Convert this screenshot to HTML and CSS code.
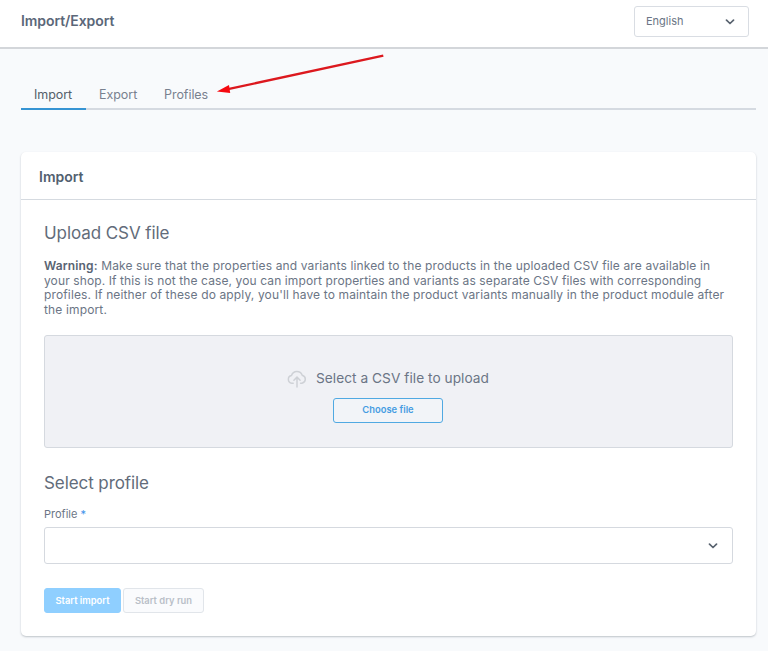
FILE: index.html
```html
<!DOCTYPE html>
<html lang="en">
<head>
<meta charset="utf-8">
<title>Import/Export</title>
<link rel="stylesheet" href="styles.css">
</head>
<body>
<header class="header">
  <h1 class="header-title"><span>Import/Export</span></h1>
  <div class="language">
    <span>English</span>
    <svg class="chevron" viewBox="0 0 10 6"><path d="M1.5 1.2 5 4.5 8.5 1.2"/></svg>
  </div>
</header>
<main class="content">
  <nav class="tabs">
    <a class="tab tab-active"><span>Import</span></a>
    <a class="tab"><span>Export</span></a>
    <a class="tab"><span>Profiles</span></a>
  </nav>
  <svg class="arrow" viewBox="0 0 170 42"><path class="arrow-line" d="M167.3 2.6 12 36.2"/><path class="arrow-head" d="M.9 38.5 13 32 14.2 40Z"/></svg>
  <section class="card">
    <h2 class="card-title"><span>Import</span></h2>
    <div class="card-body">
      <h3 class="section-title"><span>Upload CSV file</span></h3>
      <p class="warning"><span><b>Warning:</b> Make sure that the properties and variants linked to the products in the uploaded CSV file are available in</span><br><span class="tight">your shop. If this is not the case, you can import properties and variants as separate CSV files with corresponding</span><br><span>profiles. If neither of these do apply, you'll have to maintain the product variants manually in the product module after</span><br><span>the import.</span></p>
      <div class="dropzone">
        <div class="drop-label">
          <svg class="cloud" viewBox="0 0 20 18"><path d="M6.2 13.2H4.8A3.9 3.9 0 0 1 4.5 5.5 5.7 5.7 0 0 1 15.2 5.2 4.1 4.1 0 0 1 15 13.2h-1.4M10 17V7.4M6.9 10.2 10 7.1l3.1 3.1"/></svg>
          <span>Select a CSV file to upload</span>
        </div>
        <button class="btn btn-outline"><span>Choose file</span></button>
      </div>
      <h3 class="section-title profile-title"><span>Select profile</span></h3>
      <label class="label"><span>Profile</span> <span class="required">*</span></label>
      <div class="select">
        <svg class="chevron" viewBox="0 0 10 6"><path d="M1.5 1.2 5 4.5 8.5 1.2"/></svg>
      </div>
      <div class="actions">
        <button class="btn btn-primary"><span>Start import</span></button>
        <button class="btn btn-disabled"><span>Start dry run</span></button>
      </div>
    </div>
  </section>
</main>
</body>
</html>
```
FILE: styles.css
```css
* { box-sizing: border-box; }
body { margin: 0; height: 651px; overflow: hidden; background: #f8fafc; color: #6b7585; font-family: Inter, "Liberation Sans", sans-serif; }
h1, h2, h3, p { margin: 0; }
.header { height: 49px; padding: 0 19px 4px 21px; display: flex; align-items: center; justify-content: space-between; background: #fff; border-bottom: 2px solid #d3d6da; }
.header-title { padding-bottom: 1px; font-size: 14px; line-height: 20px; font-weight: 600; letter-spacing: -0.07px; color: #5b6779; }
.language { width: 115px; height: 31px; padding: 0 13px 2px 11px; display: flex; align-items: center; justify-content: space-between; border: 1px solid #d9dde3; border-radius: 3px; font-size: 11px; line-height: 16px; }
.language .chevron { position: relative; top: 1px; }
.chevron { width: 10px; height: 6px; fill: none; stroke: #59636f; stroke-width: 1.7; stroke-linecap: round; stroke-linejoin: round; }
.content { position: relative; padding: 31px 12px 0 21px; }
.tabs { height: 30px; display: flex; border-bottom: 2px solid #d5dae1; }
.tab { width: 65px; height: 30px; padding-left: 13px; font-size: 12.5px; line-height: 29px; letter-spacing: -0.05px; color: #78818f; }
.tab-active { color: #545e69; border-bottom: 2px solid #3694d3; }
.arrow { position: absolute; left: 216px; top: 4px; width: 170px; height: 42px; }
.arrow-line { fill: none; stroke: #dc181e; stroke-width: 2.4; }
.arrow-head { fill: #f50910; }
.card { height: 484px; margin-top: 42px; background: #fff; border-radius: 5px; box-shadow: 0 1px 2px rgba(40, 55, 70, 0.28); }
.card-title { height: 48px; padding-left: 18px; border-bottom: 1px solid #d5dae0; font-size: 14px; line-height: 49px; font-weight: 600; color: #52606f; }
.card-body { padding: 20px 23px 0; }
.section-title { font-size: 17px; line-height: 26px; font-weight: 400; letter-spacing: -0.08px; color: #626c7a; }
.warning { margin-top: 13px; font-size: 12px; line-height: 14.5px; letter-spacing: 0.14px; white-space: nowrap; }
.warning b { font-weight: 600; color: #596473; }
.warning .tight { letter-spacing: 0.11px; }
.dropzone { height: 113px; margin-top: 18px; padding: 32px 1px 0 0; display: flex; flex-direction: column; align-items: center; background: #f0f1f5; border: 1px solid #d5d9df; border-radius: 3px; }
.drop-label { height: 20px; display: flex; align-items: center; gap: 9px; font-size: 13.7px; line-height: 20px; letter-spacing: 0.04px; }
.cloud { width: 20px; height: 18px; margin-top: 2px; fill: none; stroke: #ced1d6; stroke-width: 1.5; stroke-linecap: round; stroke-linejoin: round; }
.btn { height: 25px; padding: 0; border: 1px solid; border-radius: 3px; font-family: inherit; font-size: 9.4px; line-height: 14px; font-weight: 600; }
.btn-outline { width: 110px; margin-top: 10px; padding-bottom: 1px; background: #f2f4f8; border-color: #50a9e2; color: #469ce2; }
.profile-title { margin-top: 22px; }
.label { display: block; margin-top: 9px; font-size: 11px; line-height: 18px; }
.required { color: #3f93ea; }
.select { height: 37px; margin-top: 4px; padding-right: 14px; display: flex; align-items: center; justify-content: flex-end; border: 1px solid #d5d9df; border-radius: 3px; }
.actions { display: flex; gap: 2px; margin-top: 24px; }
.btn-primary { width: 77px; background: #8fcfff; border-color: #8fcfff; color: #fff; }
.btn-disabled { width: 81px; background: #fafbfd; border-color: #e1e5ea; color: #b9bfc8; }
```
